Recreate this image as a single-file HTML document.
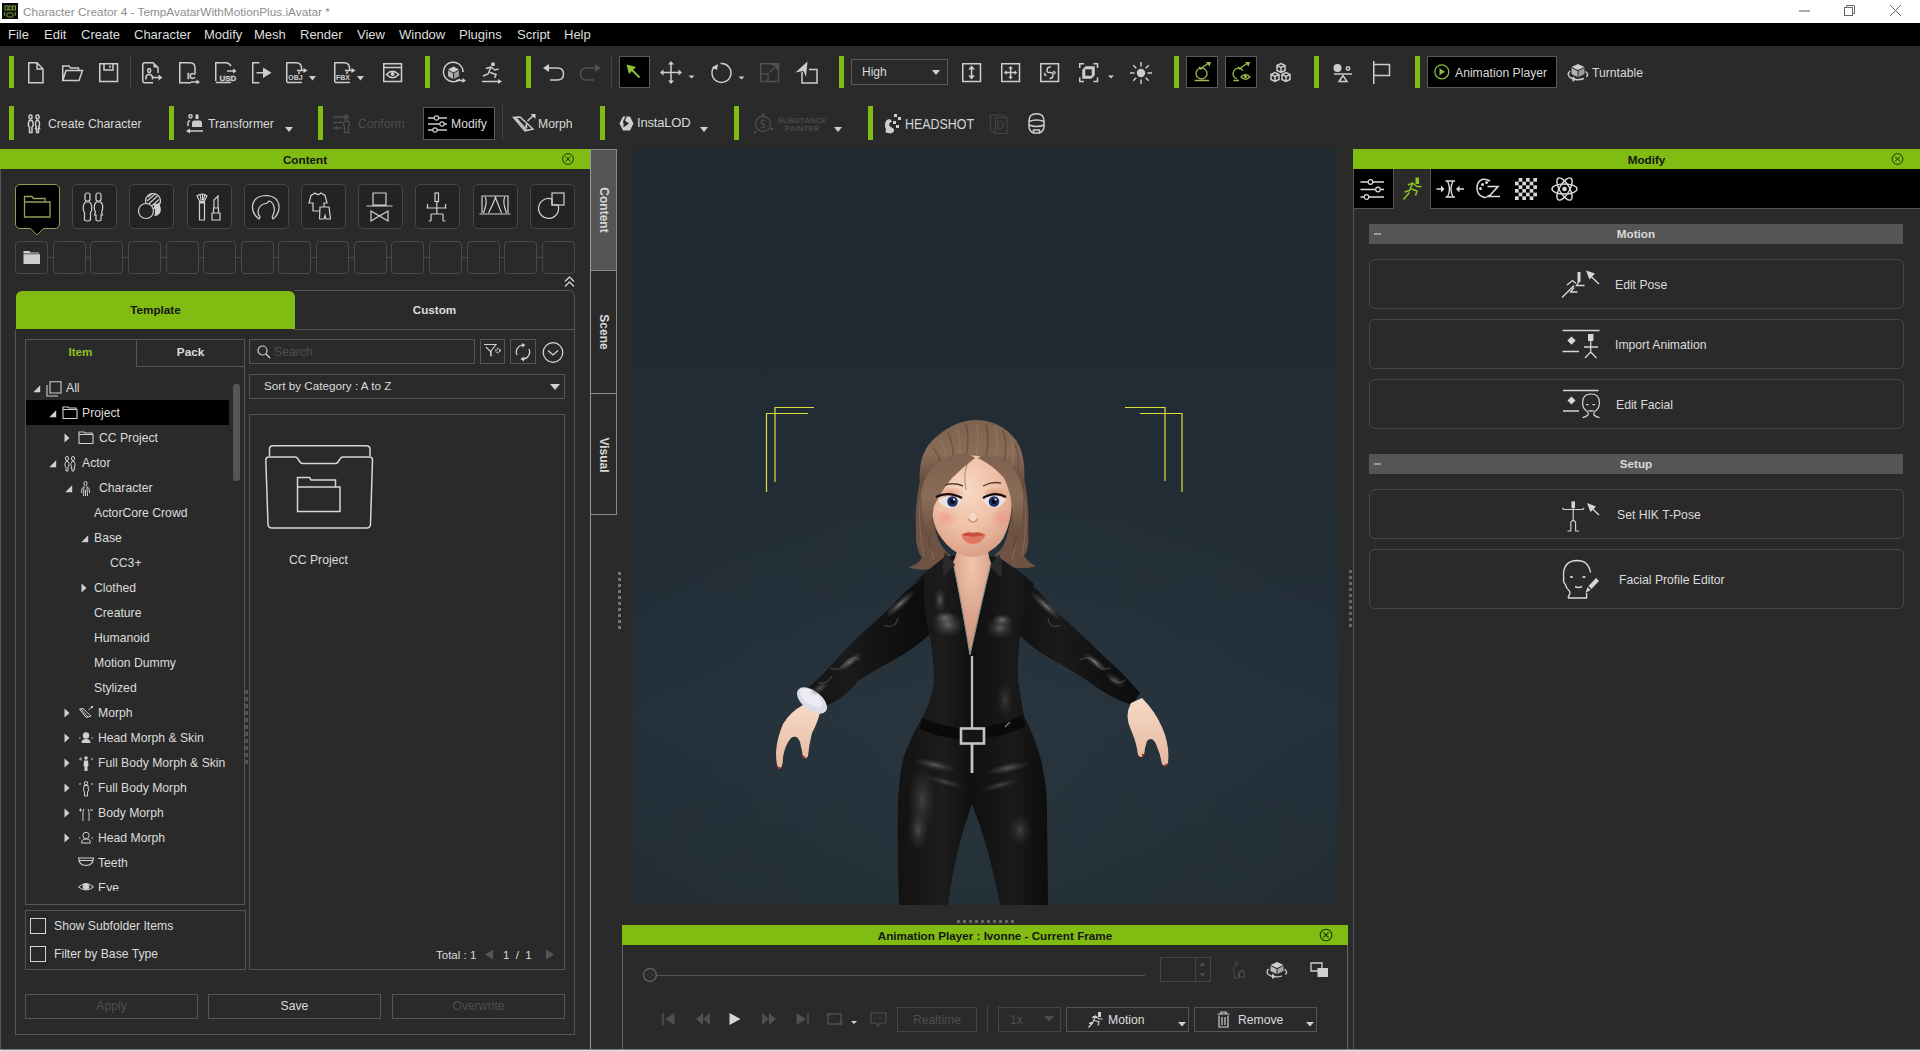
<!DOCTYPE html>
<html><head><meta charset="utf-8">
<style>
*{box-sizing:border-box;margin:0;padding:0}
html,body{width:1920px;height:1051px;overflow:hidden;background:#2a2a2a;font-family:"Liberation Sans",sans-serif;color:#d8d8d8;font-size:12px}
.a{position:absolute;white-space:nowrap}
.g{background:#80bc12}
.gb{position:absolute;width:5px;height:32px;background:#80bc12}
svg{position:absolute;overflow:visible}
.s{fill:none;stroke:#cdcdcd;stroke-width:1.5}
.sd{fill:none;stroke:#505050;stroke-width:1.5}
.f{fill:#cdcdcd}
.t{position:absolute;white-space:nowrap;font-size:12px;color:#d9d9d9;line-height:14px}
.hdr{position:absolute;text-align:center;font-weight:bold;font-size:12px;color:#151515;line-height:14px}
.dd{position:absolute;width:0;height:0;border-left:4px solid transparent;border-right:4px solid transparent;border-top:5px solid #d0d0d0}
</style></head><body>
<!-- ============ TITLE BAR ============ -->
<div class="a" style="left:0;top:0;width:1920px;height:23px;background:#fff"></div>
<div class="a" style="left:2px;top:3px;width:16px;height:16px;background:#0a0a0a"></div>
<svg style="left:2px;top:3px" width="16" height="16"><g fill="none" stroke="#7a9a3a" stroke-width="1"><rect x="3" y="3" width="3" height="4"/><rect x="7" y="3" width="3" height="4"/><rect x="11" y="3" width="2.5" height="4"/><path d="M3 9 Q2 11 3 13 M13 9 Q14 11 13 13"/><rect x="5" y="10" width="6" height="4" rx="1"/></g></svg>
<div class="a" style="left:23px;top:5px;font-size:11.8px;color:#8d8d8d;line-height:14px">Character Creator 4 - TempAvatarWithMotionPlus.iAvatar *</div>
<svg style="left:1798px;top:10px" width="14" height="2"><path d="M1 1H12" stroke="#555" stroke-width="1"/></svg>
<svg style="left:1843px;top:4px" width="14" height="14"><g fill="none" stroke="#666" stroke-width="1"><rect x="1.5" y="3.5" width="8" height="8"/><path d="M3.5 3.5V1.5H11.5V9.5H9.5"/></g></svg>
<svg style="left:1889px;top:4px" width="14" height="14"><path d="M1 1L12 12M12 1L1 12" stroke="#666" stroke-width="1"/></svg>

<!-- ============ MENU BAR ============ -->
<div class="a" style="left:0;top:23px;width:1920px;height:23px;background:#000"></div>
<div class="a" style="top:27px;left:0;font-size:13px;color:#dedede;line-height:15px">
<span class="a" style="left:8px">File</span><span class="a" style="left:44px">Edit</span><span class="a" style="left:81px">Create</span><span class="a" style="left:134px">Character</span><span class="a" style="left:204px">Modify</span><span class="a" style="left:254px">Mesh</span><span class="a" style="left:300px">Render</span><span class="a" style="left:357px">View</span><span class="a" style="left:399px">Window</span><span class="a" style="left:459px">Plugins</span><span class="a" style="left:517px">Script</span><span class="a" style="left:564px">Help</span>
</div>

<!-- ============ TOOLBAR ROW 1 ============ -->
<div class="gb" style="left:9px;top:56px"></div>
<!-- new -->
<svg style="left:28px;top:62px" width="16" height="22"><path class="s" d="M0.75 0.75H9L15 7V20.75H0.75Z M9 0.75V7H15"/></svg>
<!-- open -->
<svg style="left:62px;top:65px" width="22" height="17"><path class="s" d="M0.75 15.5V1H7L8.5 3H16.5V5.5 M0.75 15.5L4 5.5H20.5L17 15.5Z"/></svg>
<!-- save -->
<svg style="left:99px;top:63px" width="20" height="20"><path class="s" d="M0.75 0.75H18.5V18.5H0.75Z M5 0.75V7H14V0.75 M11 2.5V5"/></svg>
<div class="a" style="left:130px;top:56px;width:1px;height:32px;background:#444"></div>
<!-- export avatar -->
<svg style="left:142px;top:62px" width="22" height="22"><path class="s" d="M11 20.75H3Q0.75 20.75 0.75 18.5V3Q0.75 0.75 3 0.75H11L16 5.5V11"/><path class="f" d="M11.5 1.5V5.5H15.5Z"/><ellipse class="s" cx="7.2" cy="8.6" rx="1.4" ry="2.1" stroke-width="1.2"/><path class="s" d="M4 17.5V15.5Q4 12.5 7.2 12.5Q10.4 12.5 10.4 15.5V17.5"/><path class="s" d="M10.5 15.5H18"/><path class="f" d="M16.5 12.5L20.5 15.5L16.5 18.5Z"/></svg>
<!-- IC -->
<svg style="left:179px;top:62px" width="22" height="22"><path class="s" d="M12 20.75H0.75V0.75H11Q16 0.75 16 6V12"/><text x="8" y="17" font-family="Liberation Sans" font-weight="bold" font-size="8.5" fill="#cdcdcd" stroke="#cdcdcd" stroke-width=".3">IC</text><path class="s" d="M12 20H19"/><path class="f" d="M17.5 17.5L21 20L17.5 22.5Z"/></svg>
<!-- USD -->
<svg style="left:215px;top:62px" width="22" height="22"><path class="s" d="M0.75 19V0.75H11Q14 0.75 16 4 M0.75 20.5H16"/><text x="4.5" y="18.5" font-family="Liberation Sans" font-weight="bold" font-size="8" fill="#cdcdcd" stroke="#cdcdcd" stroke-width=".3">USD</text><path class="s" d="M12 9H20"/><path class="f" d="M18 6.5L21.5 9L18 11.5Z"/></svg>
<!-- export bracket -->
<svg style="left:252px;top:62px" width="20" height="22"><path class="s" d="M7.5 0.75H0.75V20.75H7.5 M4.5 10.75H12"/><path class="f" d="M11 5.5L19.5 10.75L11 16Z"/></svg>
<!-- OBJ -->
<svg style="left:286px;top:62px" width="32" height="22"><path class="s" d="M0.75 20V0.75H10Q15.5 0.75 15.5 6V8 M0.75 20.5H16"/><text x="2.2" y="17.5" font-family="Liberation Sans" font-weight="bold" font-size="7" fill="#cdcdcd">OBJ</text><path class="s" d="M11 8.5H19 M13 9.5V12"/><path class="f" d="M17.5 6L21.5 8.5L17.5 11Z"/><path class="f" d="M23 14H30L26.5 18.5Z"/></svg>
<!-- FBX -->
<svg style="left:334px;top:62px" width="32" height="22"><path class="s" d="M0.75 20V0.75H10Q15.5 0.75 15.5 6V8 M0.75 20.5H16"/><text x="2" y="17.5" font-family="Liberation Sans" font-weight="bold" font-size="7" fill="#cdcdcd">FBX</text><path class="s" d="M11 8.5H19 M13 9.5V12"/><path class="f" d="M17.5 6L21.5 8.5L17.5 11Z"/><path class="f" d="M23 14H30L26.5 18.5Z"/></svg>
<!-- eye window -->
<svg style="left:383px;top:63px" width="20" height="20"><path class="s" d="M0.75 0.75H18.5V18.5H0.75Z M0.75 4.5H18.5"/><path class="s" d="M3.5 11.5Q9.6 5 15.7 11.5Q9.6 18 3.5 11.5Z"/><circle class="f" cx="9.6" cy="11" r="2"/></svg>
<div class="gb" style="left:425px;top:56px"></div>
<!-- cube rotate -->
<svg style="left:443px;top:62px" width="24" height="22"><path class="s" d="M17 17A9.75 9.75 0 1 1 20 10" stroke-dasharray="none"/><path class="f" d="M10.5 4.5L16 7.5L10.5 10.5L5 7.5Z"/><path class="f" d="M5 8.5L10 11.2V17L5 14.2Z" opacity=".85"/><path class="f" d="M11 11.2L16 8.5V14.2L11 17Z" opacity=".7"/><path class="s" d="M13 18.5H21"/><path class="f" d="M19.5 16L23 18.5L19.5 21Z"/></svg>
<!-- motion -->
<svg style="left:480px;top:62px" width="23" height="22"><circle class="f" cx="13" cy="2.2" r="2"/><path class="s" d="M6 6.5L11 5L15 8L18.5 7 M11 5Q9 10 8 12L3 14 M10 10.5L16 12.5L14.5 16"/><path class="s" d="M2 19.5H19"/><path class="f" d="M18 17L22 19.5L18 22Z"/></svg>
<div class="gb" style="left:526px;top:56px"></div>
<!-- undo -->
<svg style="left:543px;top:64px" width="23" height="18"><path class="s" d="M4 4H14.5Q20.5 4 20.5 10Q20.5 16 14.5 16H7"/><path class="f" d="M0 4L6 0V8Z"/></svg>
<!-- redo (disabled) -->
<svg style="left:578px;top:64px" width="23" height="18"><path class="sd" d="M19 4H8.5Q2.5 4 2.5 10Q2.5 16 8.5 16H16"/><path fill="#505050" d="M23 4L17 0V8Z"/></svg>
<div class="a" style="left:611px;top:56px;width:1px;height:32px;background:#444"></div>
<!-- select -->
<div class="a" style="left:619px;top:56px;width:31px;height:32px;background:#000;border:1px solid #5a5a5a"></div>
<svg style="left:626px;top:64px" width="20" height="18"><path fill="#8dc43c" d="M0.5 0.5L10 3L6.5 6.5L3 10Z"/><path d="M5 5L13.5 13.5" stroke="#8dc43c" stroke-width="1.8"/></svg>
<!-- move -->
<svg style="left:660px;top:61px" width="36" height="23"><path class="s" d="M11 1.5V21.5 M1 11.5H21"/><path class="f" d="M11 0L14 3.5H8Z M11 23L14 19.5H8Z M0 11.5L3.5 8.5V14.5Z M22 11.5L18.5 8.5V14.5Z"/><path fill="#cdcdcd" d="M28.5 14.5H34.5L31.5 17.5Z"/></svg>
<!-- rotate -->
<svg style="left:710px;top:62px" width="36" height="22"><path class="s" d="M4.5 4.5A9.5 9.5 0 1 0 10.5 1.5"/><path class="f" d="M2 5.5L8 2L7 8Z"/><path fill="#cdcdcd" d="M28.5 14.5H34.5L31.5 17.5Z"/></svg>
<!-- scale disabled -->
<svg style="left:760px;top:63px" width="20" height="20"><path class="sd" d="M0.75 0.75H18.5V18.5H0.75Z M0.75 11H8V18.5 M10 9L17 2 M12 2H17V7"/></svg>
<!-- pivot -->
<svg style="left:795px;top:61px" width="24" height="24"><path class="s" d="M7 11V22H22V8.5H14"/><path class="f" d="M12.5 0.5L11 16L8.5 10L0.5 11.5Z"/></svg>
<div class="gb" style="left:839px;top:56px"></div>
<!-- High dropdown -->
<div class="a" style="left:851px;top:59px;width:97px;height:26px;border:1px solid #5a5a5a"></div>
<div class="a" style="left:862px;top:65px;font-size:12px;color:#dadada;line-height:14px">High</div>
<div class="dd" style="left:932px;top:70px"></div>
<!-- fit boxes -->
<svg style="left:962px;top:63px" width="20" height="20"><path class="s" d="M0.75 0.75H18.5V18.5H0.75Z M9.6 5V14"/><path class="f" d="M9.6 2.5L13 6.5H6.2Z M9.6 16.5L13 12.5H6.2Z"/></svg>
<svg style="left:1001px;top:63px" width="20" height="20"><path class="s" d="M0.75 0.75H18.5V18.5H0.75Z M9.6 4.5V14.7 M4.5 9.6H14.7"/><path class="f" d="M9.6 3L12 5.5H7.2Z M9.6 16.2L12 13.7H7.2Z M3 9.6L5.5 7.2V12Z M16.2 9.6L13.7 7.2V12Z"/></svg>
<svg style="left:1040px;top:63px" width="20" height="20"><path class="s" d="M0.75 0.75H18.5V18.5H0.75Z"/><path class="s" d="M11 4Q7 3.5 7 7.5Q7 10 10 9.5Q13 9 13 12Q13 15.5 9.5 15.5 M5 10Q3.5 12 6.5 12.5 M13 8.5Q16 9 14.5 11"/></svg>
<svg style="left:1079px;top:63px" width="36" height="20"><path class="s" d="M0.75 5V0.75H5 M14.5 0.75H18.5V5 M18.5 14.5V18.5H14.5 M5 18.5H0.75V14.5 M5.5 5.5H13.5V13.5H5.5Z M4 7L7 4H15V12L12 15H4Z"/><path fill="#cdcdcd" d="M29 12.5H35L32 15.5Z"/></svg>
<svg style="left:1130px;top:62px" width="22" height="22"><circle class="f" cx="11" cy="11" r="4.2"/><path class="s" d="M11 0V4.5 M11 17.5V22 M0 11H4.5 M17.5 11H22 M3.2 3.2L6.3 6.3 M15.7 15.7L18.8 18.8 M3.2 18.8L6.3 15.7 M15.7 6.3L18.8 3.2" stroke-width="1.3"/></svg>
<div class="gb" style="left:1174px;top:56px"></div>
<!-- green toggle boxes -->
<div class="a" style="left:1186px;top:56px;width:32px;height:32px;background:#000;border:1px solid #5a5a5a"></div>
<svg style="left:1193px;top:62px" width="20" height="20"><circle cx="8.5" cy="11.5" r="5.5" fill="none" stroke="#9abd52" stroke-width="1.3"/><path d="M6 5L8.5 7.5 M8.5 6L15 1.5" stroke="#9abd52" stroke-width="1.3" fill="none"/><path fill="#9abd52" d="M13 0L18 0L16.5 4.5Z"/><path d="M1.5 18.5H16" stroke="#9abd52" stroke-width="1.5"/></svg>
<div class="a" style="left:1225px;top:56px;width:32px;height:32px;background:#000;border:1px solid #5a5a5a"></div>
<svg style="left:1232px;top:62px" width="20" height="20"><path d="M11 8.5A5.5 5.5 0 1 0 5 17" fill="none" stroke="#9abd52" stroke-width="1.3"/><path d="M6 5L8.5 7.5 M8.5 6L15 1.5" stroke="#9abd52" stroke-width="1.3" fill="none"/><path fill="#9abd52" d="M13 0L18 0L16.5 4.5Z"/><path d="M1.5 18.5H7" stroke="#9abd52" stroke-width="1.5"/><path d="M9 15Q13.5 10.5 18 15Q13.5 19.5 9 15Z" fill="none" stroke="#9abd52" stroke-width="1.2"/><circle cx="13.5" cy="14.6" r="1.6" fill="#9abd52"/></svg>
<!-- cubes -->
<svg style="left:1270px;top:62px" width="22" height="22"><g class="s" stroke-width="1.1"><path d="M7 3.5L11 1.5L15 3.5V8.5L11 10.5L7 8.5Z M7 3.5L11 5.5L15 3.5 M11 5.5V10.5"/><path d="M1 12.5L5 10.5L9 12.5V17.5L5 19.5L1 17.5Z M1 12.5L5 14.5L9 12.5 M5 14.5V19.5"/><path d="M12 12.5L16 10.5L20 12.5V17.5L16 19.5L12 17.5Z M12 12.5L16 14.5L20 12.5 M16 14.5V19.5"/></g></svg>
<div class="gb" style="left:1314px;top:56px"></div>
<!-- balance -->
<svg style="left:1333px;top:63px" width="20" height="20"><circle class="f" cx="4.5" cy="5" r="4"/><circle class="s" cx="15" cy="5.5" r="1.7" stroke-width="1.1"/><path class="s" d="M1 11H19" stroke-width="1.2"/><path class="s" d="M10 12.5L6 18.5H14Z" stroke-width="1.3"/></svg>
<!-- flag -->
<svg style="left:1373px;top:61px" width="18" height="24"><path class="s" d="M0.75 0V23 M0.75 3.5H16.5V14.5H0.75"/></svg>
<div class="gb" style="left:1415px;top:56px"></div>
<!-- animation player btn -->
<div class="a" style="left:1427px;top:56px;width:130px;height:32px;background:#000;border:1px solid #5a5a5a"></div>
<svg style="left:1434px;top:64px" width="16" height="16"><circle cx="7.8" cy="7.8" r="7" fill="none" stroke="#8fbf40" stroke-width="1.2"/><path fill="#8fbf40" d="M5.5 4.3L11 7.8L5.5 11.3Z"/></svg>
<div class="t" style="left:1455px;top:66px;font-size:12.2px">Animation Player</div>
<!-- turntable -->
<svg style="left:1567px;top:63px" width="22" height="20"><path class="f" d="M11 1L17.5 4L11 7L4.5 4Z"/><path class="f" d="M4.5 5L10.5 8V14L4.5 11Z" opacity=".85"/><path class="f" d="M11.5 8L17.5 5V11L11.5 14Z" opacity=".7"/><path class="s" d="M3 8Q-1 12 4 15Q9 18 17 15.5 M18.5 8.5Q22 11 19.5 14" stroke-width="1.2"/><path class="f" d="M6 13L9 16.5L5.5 19Z"/></svg>
<div class="t" style="left:1592px;top:66px;font-size:12.2px">Turntable</div>

<div class="gb" style="left:9px;top:106px;height:34px"></div>
<svg style="left:28px;top:114px" width="14" height="20"><g class="s" stroke-width="1"><rect x="1" y="1" width="3" height="4" rx="1.5"/><rect x="8" y="1" width="3" height="4" rx="1.5"/><path d="M1.5 6.5Q0 8 0.5 12L1.5 13V18.5H4V13L5 12Q5.5 8 4 6.5Z"/><path d="M8.5 6.5Q7 8 7.5 11.5L8.3 12.5L7.5 14.5H8.5V18.5H10.5V14.5H11.5L10.7 12.5L11.5 11.5Q12 8 10.5 6.5Z"/></g></svg>
<div class="t" style="left:48px;top:117px;font-size:12.2px">Create Character</div>
<div class="gb" style="left:169px;top:106px;height:34px"></div>
<svg style="left:186px;top:114px" width="18" height="20"><circle class="s" cx="4.5" cy="2.3" r="1.6" stroke-width="1"/><path class="f" d="M9.5 0.5H12.5V5H9.5Z M8 6.5H14Q16 6.5 16 9V13H6V9Q6 6.5 8 6.5Z"/><path class="s" d="M2 12V9Q2 7 4 6.5" stroke-width="1"/><path class="s" d="M3 17H17" stroke-width="1.2"/><path class="f" d="M0 17L4 14.5V19.5Z"/></svg>
<div class="t" style="left:208px;top:117px;font-size:12.2px">Transformer</div>
<div class="dd" style="left:285px;top:127px"></div>
<div class="gb" style="left:318px;top:106px;height:34px"></div>
<svg style="left:333px;top:114px" width="24" height="20"><g fill="none" stroke="#4e4e4e" stroke-width="1.3"><path d="M0 3H16 M0 8.5H9 M0 14H9"/><circle cx="13" cy="3" r="2" /><path d="M4 12Q2 14 4 16"/><path d="M13 7Q10 7 10.5 11L11.5 12V18.5H15.5V12L16.5 11Q17 7 14 7Z"/></g></svg>
<div class="t" style="left:358px;top:117px;font-size:12.2px;color:#4e4e4e">Conform</div>
<div class="a" style="left:423px;top:107px;width:72px;height:33px;background:#000;border:1px solid #5a5a5a"></div>
<svg style="left:428px;top:115px" width="20" height="18"><g class="s" stroke-width="1.3"><path d="M0 3H19 M0 9H19 M0 15H19"/></g><circle cx="8.5" cy="3" r="2.2" fill="#000" stroke="#cdcdcd" stroke-width="1.2"/><circle cx="14" cy="9" r="2.2" fill="#000" stroke="#cdcdcd" stroke-width="1.2"/><circle cx="7" cy="15" r="2.2" fill="#000" stroke="#cdcdcd" stroke-width="1.2"/></svg>
<div class="t" style="left:451px;top:117px;font-size:12.2px">Modify</div>
<div class="a" style="left:502px;top:105px;width:1px;height:35px;background:#444"></div>
<svg style="left:513px;top:114px" width="24" height="20"><g class="s" stroke-width="1.2"><path d="M0.5 3.5L7 3L20 15L12 17Z M3 4L14 16.5"/><path d="M14 10Q12 12 14 14" /><path d="M14.5 7L21.5 0.5"/></g><path class="f" d="M17.5 0H22.5V5Z"/></svg>
<div class="t" style="left:538px;top:117px;font-size:12.2px">Morph</div>
<div class="gb" style="left:600px;top:106px;height:34px"></div>
<svg style="left:619px;top:116px" width="15" height="15"><path class="f" d="M4 0.5H11L14.5 7.5L11 14.5H4L0.5 7.5Z"/><path d="M4.5 3.5L10 7.5L4.5 11.5Z" fill="#2a2a2a"/><path d="M7 0.5L4.5 7" stroke="#2a2a2a" stroke-width="1.2"/></svg>
<div class="t" style="left:637px;top:116px;font-size:13px;letter-spacing:-0.2px">InstaLOD</div>
<div class="dd" style="left:700px;top:127px"></div>
<div class="gb" style="left:734px;top:106px;height:34px"></div>
<svg style="left:753px;top:113px" width="22" height="22"><g fill="none" stroke="#4a4a4a" stroke-width="1.4"><circle cx="10" cy="11" r="7.5"/><path d="M12.5 8Q10 6.5 8.5 8.3Q7.5 10 10 11Q12.5 12 11.5 13.8Q10 15.5 7.5 14"/></g><circle cx="10" cy="1.8" r="1.6" fill="#4a4a4a"/><circle cx="19" cy="16" r="1.6" fill="#4a4a4a"/><circle cx="2" cy="19" r="1.6" fill="#4a4a4a"/></svg>
<div class="a" style="left:777px;top:117px;font-size:8px;line-height:8px;font-weight:bold;color:#484848;text-align:center;width:50px">SUBSTANCE<br>PAINTER</div>
<div class="dd" style="left:834px;top:127px"></div>
<div class="gb" style="left:868px;top:106px;height:34px"></div>
<svg style="left:884px;top:113px" width="18" height="22"><path class="f" d="M6 6Q1 6 1 12Q1 15 2 16L1.5 19.5L7 20.5L10 18.5V16L7 14Q4.5 13 5.5 10L8 8.5Z"/><rect class="f" x="10" y="1" width="3" height="3"/><rect class="f" x="14" y="4" width="3" height="3"/><rect class="f" x="9" y="8" width="3" height="3"/><rect class="f" x="12" y="12" width="3" height="3"/></svg>
<div class="a" style="left:905px;top:116px;font-size:14.5px;line-height:16px;color:#d5d5d5;transform:scaleX(0.856);transform-origin:0 0">HEADSHOT</div>
<svg style="left:990px;top:114px" width="18" height="20"><g fill="none" stroke="#444" stroke-width="1.2"><path d="M0.5 1H12L17 3.5V19.5H5.5L0.5 17Z M5.5 3.5H17 M5.5 3.5V19.5"/><path d="M8 7V15H10Q13 15 13 11Q13 7 10 7Z"/></g></svg>
<svg style="left:1027px;top:113px" width="19" height="22"><g class="s" stroke-width="1.2"><path d="M2 8Q2 0.8 9.5 0.8Q17 0.8 17 8V13Q17 18 12.5 20H6.5Q2 18 2 13Z"/><path d="M2 8.5Q9.5 5.5 17 8.5 M2 12Q9.5 15 17 12 M6.5 20V17H12.5V20"/></g></svg>


<!-- ============ CONTENT PANEL ============ -->
<!-- CP -->
<!--CPSTART--><div class="a g" style="left:0;top:149px;width:590px;height:20px"></div>
<div class="hdr" style="font-size:11.7px;left:0;top:153px;width:610px">Content</div>
<svg style="left:562px;top:153px" width="13" height="13"><circle cx="6" cy="6" r="5.4" fill="none" stroke="#1e3a00" stroke-width="1"/><path d="M3.5 3.5L8.5 8.5M8.5 3.5L3.5 8.5" stroke="#1e3a00" stroke-width="1"/></svg>
<div class="a" style="left:0;top:169px;width:1px;height:880px;background:#555"></div>
<div class="a" style="left:15px;top:184px;width:45px;height:45px;background:#000;border:1px solid #8aa052;border-radius:5px"></div>
<svg style="left:30px;top:228px" width="14" height="8"><path d="M0 0L7 7L14 0" fill="#000" stroke="#8aa052" stroke-width="1"/><path d="M1 -1H13" stroke="#000" stroke-width="2"/></svg>
<svg style="left:15px;top:187px" width="46" height="46"><path d="M9.5 15V9.5H17L18.5 11.5H30V15 M9.5 15H35V30H9.5Z" fill="none" stroke="#8fa35a" stroke-width="1.3"/></svg>
<div class="a" style="left:72px;top:184px;width:45px;height:45px;background:#232323;border:1px solid #474747;border-radius:5px"></div>
<svg style="left:72px;top:187px" width="46" height="46"><g fill="none" stroke="#d0d0d0" stroke-width="1.2"><rect x="13" y="6" width="5" height="8" rx="2"/><rect x="24" y="6" width="5" height="8" rx="2"/><path d="M13.5 15Q10.5 17 11.5 24L12.5 25.5V33Q15.5 35 18.5 33V25.5L19.5 24Q20.5 17 17.5 15Z"/><path d="M24.5 15Q21.5 17 22.5 23L23.5 25L22.5 28H24V33Q26.5 35 29 33V28H30.5L29.5 25L30.5 23Q31.5 17 28.5 15Z"/></g></svg>
<div class="a" style="left:129px;top:184px;width:45px;height:45px;background:#232323;border:1px solid #474747;border-radius:5px"></div>
<svg style="left:129px;top:187px" width="46" height="46"><g fill="none" stroke="#d0d0d0" stroke-width="1.2"><circle cx="24" cy="14" r="7.5"/><path d="M19 10L23 6.5 M18 14L26.5 6.8 M18.5 18L28.5 9 M21 20.5L30 12.5 M25 21L31 15.5"/><circle cx="17" cy="24" r="7.5" fill="#232323"/></g><path d="M27 16.5A7.5 7.5 0 0 1 25 29A7.5 7.5 0 0 0 24.5 18Z" fill="#d0d0d0"/><path d="M24.8 17.8Q29 15.5 30.5 18Q33 22 31 26Q29 29 25.5 29Q27 23 24.8 17.8Z" fill="#d0d0d0"/></svg>
<div class="a" style="left:187px;top:184px;width:45px;height:45px;background:#232323;border:1px solid #474747;border-radius:5px"></div>
<svg style="left:187px;top:187px" width="46" height="46"><g fill="none" stroke="#d0d0d0" stroke-width="1.2"><path d="M10 9Q15 5 20 9L17.5 14H12.5Z M13 7L14 13 M15.5 6.5L15.5 13 M18 7L16.5 13 M12 15H18 M12.5 16H17.5V33H12.5Z"/><path d="M25 33V26H33V33Z M26.5 26V21H31.5V26 M27 21V13L31 9V21"/></g></svg>
<div class="a" style="left:244px;top:184px;width:45px;height:45px;background:#232323;border:1px solid #474747;border-radius:5px"></div>
<svg style="left:244px;top:187px" width="46" height="46"><g fill="none" stroke="#d0d0d0" stroke-width="1.2"><path d="M15 32Q8 27 8.5 19Q9.5 9 22 8.5Q34 9 35 19Q35.5 27 29 32Q27.5 30 29 28Q31 24 30 20Q29 15 25 14Q23 17 19.5 17Q15 19 14 24Q14 28 16 30Q16 31 15 32Z"/></g></svg>
<div class="a" style="left:301px;top:184px;width:45px;height:45px;background:#232323;border:1px solid #474747;border-radius:5px"></div>
<svg style="left:301px;top:187px" width="46" height="46"><g fill="none" stroke="#d0d0d0" stroke-width="1.2"><path d="M14 6L10 8.5L8 16H12V24H23V16H26L24 8.5L20 6Q17 9 14 6Z"/><path d="M19 20H28L29.5 32H25L24 28.5L23 32H18.5Z" fill="#232323"/></g></svg>
<div class="a" style="left:358px;top:184px;width:45px;height:45px;background:#232323;border:1px solid #474747;border-radius:5px"></div>
<svg style="left:358px;top:187px" width="46" height="46"><g fill="none" stroke="#d0d0d0" stroke-width="1.2"><path d="M15 6H28V18H15Z M8.5 19H34.5"/><path d="M13 24L21.5 29L30 24V34L21.5 29L13 34Z"/></g></svg>
<div class="a" style="left:415px;top:184px;width:45px;height:45px;background:#232323;border:1px solid #474747;border-radius:5px"></div>
<svg style="left:415px;top:187px" width="46" height="46"><g fill="none" stroke="#d0d0d0" stroke-width="1.2"><rect x="20" y="6" width="3.5" height="8.5"/><path d="M11.5 21H31.5 M12.5 17V21 M30.5 17V21 M21.8 14.5V27 M16 27H28 M16 27V34 M28 27V34 M13.5 34H16 M28 34H30.5"/></g></svg>
<div class="a" style="left:473px;top:184px;width:45px;height:45px;background:#232323;border:1px solid #474747;border-radius:5px"></div>
<svg style="left:473px;top:187px" width="46" height="46"><g fill="none" stroke="#d0d0d0" stroke-width="1.2"><path d="M9 26V9H35V26 M6.5 27H37.5"/><path d="M10.5 26Q15 14 12 9.5 M15.5 26Q20 17 23 9.5M22 9.5Q25 17 28.5 26 M33.5 26Q29 14 32 9.5"/></g></svg>
<div class="a" style="left:530px;top:184px;width:45px;height:45px;background:#232323;border:1px solid #474747;border-radius:5px"></div>
<svg style="left:530px;top:187px" width="46" height="46"><g fill="none" stroke="#d0d0d0" stroke-width="1.2"><rect x="22" y="6" width="12" height="12"/><path d="M22 12A10 10 0 1 0 28 18H22Z"/></g></svg>
<div class="a" style="left:15px;top:241px;width:33px;height:33px;border:1px solid #4a4a4a;border-radius:4px"></div>
<div class="a" style="left:48px;top:257px;width:5px;height:1px;background:#4a4a4a"></div>
<div class="a" style="left:53px;top:241px;width:33px;height:33px;border:1px solid #4a4a4a;border-radius:4px"></div>
<div class="a" style="left:86px;top:257px;width:5px;height:1px;background:#4a4a4a"></div>
<div class="a" style="left:90px;top:241px;width:33px;height:33px;border:1px solid #4a4a4a;border-radius:4px"></div>
<div class="a" style="left:123px;top:257px;width:5px;height:1px;background:#4a4a4a"></div>
<div class="a" style="left:128px;top:241px;width:33px;height:33px;border:1px solid #4a4a4a;border-radius:4px"></div>
<div class="a" style="left:161px;top:257px;width:5px;height:1px;background:#4a4a4a"></div>
<div class="a" style="left:166px;top:241px;width:33px;height:33px;border:1px solid #4a4a4a;border-radius:4px"></div>
<div class="a" style="left:199px;top:257px;width:5px;height:1px;background:#4a4a4a"></div>
<div class="a" style="left:203px;top:241px;width:33px;height:33px;border:1px solid #4a4a4a;border-radius:4px"></div>
<div class="a" style="left:236px;top:257px;width:5px;height:1px;background:#4a4a4a"></div>
<div class="a" style="left:241px;top:241px;width:33px;height:33px;border:1px solid #4a4a4a;border-radius:4px"></div>
<div class="a" style="left:274px;top:257px;width:5px;height:1px;background:#4a4a4a"></div>
<div class="a" style="left:278px;top:241px;width:33px;height:33px;border:1px solid #4a4a4a;border-radius:4px"></div>
<div class="a" style="left:311px;top:257px;width:5px;height:1px;background:#4a4a4a"></div>
<div class="a" style="left:316px;top:241px;width:33px;height:33px;border:1px solid #4a4a4a;border-radius:4px"></div>
<div class="a" style="left:349px;top:257px;width:5px;height:1px;background:#4a4a4a"></div>
<div class="a" style="left:354px;top:241px;width:33px;height:33px;border:1px solid #4a4a4a;border-radius:4px"></div>
<div class="a" style="left:387px;top:257px;width:5px;height:1px;background:#4a4a4a"></div>
<div class="a" style="left:391px;top:241px;width:33px;height:33px;border:1px solid #4a4a4a;border-radius:4px"></div>
<div class="a" style="left:424px;top:257px;width:5px;height:1px;background:#4a4a4a"></div>
<div class="a" style="left:429px;top:241px;width:33px;height:33px;border:1px solid #4a4a4a;border-radius:4px"></div>
<div class="a" style="left:462px;top:257px;width:5px;height:1px;background:#4a4a4a"></div>
<div class="a" style="left:467px;top:241px;width:33px;height:33px;border:1px solid #4a4a4a;border-radius:4px"></div>
<div class="a" style="left:500px;top:257px;width:5px;height:1px;background:#4a4a4a"></div>
<div class="a" style="left:504px;top:241px;width:33px;height:33px;border:1px solid #4a4a4a;border-radius:4px"></div>
<div class="a" style="left:537px;top:257px;width:5px;height:1px;background:#4a4a4a"></div>
<div class="a" style="left:542px;top:241px;width:33px;height:33px;border:1px solid #4a4a4a;border-radius:4px"></div>
<svg style="left:23px;top:250px" width="18" height="15"><path d="M0.5 2V1H6.5L7.5 2.5H16V3.5H0.5Z M0.5 4.2H17V14H0.5Z" fill="#cfcfcf"/></svg>
<svg style="left:564px;top:276px" width="11" height="12"><path d="M1 5.5L5.5 1L10 5.5 M1 10.5L5.5 6L10 10.5" fill="none" stroke="#cfcfcf" stroke-width="1.3"/></svg>
<div class="a g" style="left:16px;top:291px;width:279px;height:38px;border-radius:6px 6px 0 0"></div>
<div class="hdr" style="font-size:11.7px;left:16px;top:303px;width:279px;">Template</div>
<div class="a" style="left:294px;top:290px;width:281px;height:40px;border:1px solid #555;border-left:none;border-radius:0 6px 0 0"></div>
<div class="hdr" style="font-size:11.7px;left:294px;top:303px;width:281px;color:#dcdcdc">Custom</div>
<div class="a" style="left:15px;top:329px;width:560px;height:706px;border:1px solid #555;border-top:none"></div>
<div class="a" style="left:25px;top:339px;width:220px;height:28px;border:1px solid #555;border-bottom:none"></div>
<div class="a" style="left:136px;top:339px;width:1px;height:28px;background:#555"></div>
<div class="a" style="left:136px;top:366px;width:109px;height:1px;background:#555"></div>
<div class="hdr" style="font-size:11.7px;left:25px;top:345px;width:111px;color:#8cc31c;">Item</div>
<div class="hdr" style="font-size:11.7px;left:136px;top:345px;width:109px;color:#dcdcdc;">Pack</div>
<div class="a" style="left:25px;top:366px;width:220px;height:539px;border:1px solid #555;border-top:none"></div>
<div class="a" style="left:26px;top:400px;width:203px;height:25px;background:#000"></div>
<div class="a" style="left:233px;top:384px;width:7px;height:97px;background:#555;border-radius:3px"></div>
<div class="a" style="left:245px;top:690px;width:3px;height:4px;background:#555"></div>
<div class="a" style="left:245px;top:697px;width:3px;height:4px;background:#555"></div>
<div class="a" style="left:245px;top:704px;width:3px;height:4px;background:#555"></div>
<div class="a" style="left:245px;top:711px;width:3px;height:4px;background:#555"></div>
<div class="a" style="left:245px;top:718px;width:3px;height:4px;background:#555"></div>
<div class="a" style="left:245px;top:725px;width:3px;height:4px;background:#555"></div>
<div class="a" style="left:245px;top:732px;width:3px;height:4px;background:#555"></div>
<div class="a" style="left:245px;top:739px;width:3px;height:4px;background:#555"></div>
<div class="a" style="left:245px;top:746px;width:3px;height:4px;background:#555"></div>
<div class="a" style="left:245px;top:753px;width:3px;height:4px;background:#555"></div>
<div class="a" style="left:245px;top:760px;width:3px;height:4px;background:#555"></div>
<div class="a" style="left:26px;top:376px;width:203px;height:515px;overflow:hidden">
<svg style="left:7px;top:9px" width="8" height="8"><path d="M7.2 0.3V7.2H0.3Z" fill="#d0d0d0"/></svg>
<svg style="left:20px;top:5px" width="16" height="16"><path d="M1 4V15H12 M4 0.8H15V12H4Z" fill="none" stroke="#d0d0d0" stroke-width="1.1"/></svg>
<div class="t" style="left:40px;top:4px;font-size:12.2px;color:#dcdcdc;line-height:16px">All</div>
<svg style="left:23px;top:34px" width="8" height="8"><path d="M7.2 0.3V7.2H0.3Z" fill="#d0d0d0"/></svg>
<svg style="left:36px;top:30px" width="16" height="16"><path d="M1 2V1H6L7 2H14V3.5 M1 3.5H15V12.5H1Z M1 2V12" fill="none" stroke="#d0d0d0" stroke-width="1.1"/></svg>
<div class="t" style="left:56px;top:29px;font-size:12.2px;color:#dcdcdc;line-height:16px">Project</div>
<svg style="left:38px;top:57px" width="6" height="10"><path d="M0.5 0.5L5.5 5L0.5 9.5Z" fill="#d0d0d0"/></svg>
<svg style="left:52px;top:55px" width="16" height="16"><path d="M1 2V1H6L7 2H14V3.5 M1 3.5H15V12.5H1Z M1 2V12" fill="none" stroke="#d0d0d0" stroke-width="1.1"/></svg>
<div class="t" style="left:73px;top:54px;font-size:12.2px;color:#dcdcdc;line-height:16px">CC Project</div>
<svg style="left:23px;top:84px" width="8" height="8"><path d="M7.2 0.3V7.2H0.3Z" fill="#d0d0d0"/></svg>
<svg style="left:38px;top:80px" width="16" height="16"><g fill="none" stroke="#d0d0d0" stroke-width="1"><rect x="1.5" y="0.5" width="3" height="4" rx="1.5"/><rect x="7.5" y="0.5" width="3" height="4" rx="1.5"/><path d="M2 5.5Q0.5 7 1 10L2 11V15H4V11L5 10Q5.5 7 4 5.5Z M8 5.5Q6.5 7 7 10L8 11L7 12.5H8V15H10V12.5H11L10 11L11 10Q11.5 7 10 5.5Z"/></g></svg>
<div class="t" style="left:56px;top:79px;font-size:12.2px;color:#dcdcdc;line-height:16px">Actor</div>
<svg style="left:39px;top:109px" width="8" height="8"><path d="M7.2 0.3V7.2H0.3Z" fill="#d0d0d0"/></svg>
<svg style="left:54px;top:105px" width="16" height="16"><g fill="none" stroke="#d0d0d0" stroke-width="1"><rect x="4" y="0.5" width="3" height="4" rx="1.5"/><path d="M4 5.5Q1 7 1.5 12 M7 5.5Q10 7 9.5 12 M4 5.5L3.5 15 M7 5.5L7.5 15 M5.5 9V15"/></g></svg>
<div class="t" style="left:73px;top:104px;font-size:12.2px;color:#dcdcdc;line-height:16px">Character</div>
<div class="t" style="left:68px;top:129px;font-size:12.2px;color:#dcdcdc;line-height:16px">ActorCore Crowd</div>
<svg style="left:55px;top:159px" width="8" height="8"><path d="M7.2 0.3V7.2H0.3Z" fill="#d0d0d0"/></svg>
<div class="t" style="left:68px;top:154px;font-size:12.2px;color:#dcdcdc;line-height:16px">Base</div>
<div class="t" style="left:84px;top:179px;font-size:12.2px;color:#dcdcdc;line-height:16px">CC3+</div>
<svg style="left:55px;top:207px" width="6" height="10"><path d="M0.5 0.5L5.5 5L0.5 9.5Z" fill="#d0d0d0"/></svg>
<div class="t" style="left:68px;top:204px;font-size:12.2px;color:#dcdcdc;line-height:16px">Clothed</div>
<div class="t" style="left:68px;top:229px;font-size:12.2px;color:#dcdcdc;line-height:16px">Creature</div>
<div class="t" style="left:68px;top:254px;font-size:12.2px;color:#dcdcdc;line-height:16px">Humanoid</div>
<div class="t" style="left:68px;top:279px;font-size:12.2px;color:#dcdcdc;line-height:16px">Motion Dummy</div>
<div class="t" style="left:68px;top:304px;font-size:12.2px;color:#dcdcdc;line-height:16px">Stylized</div>
<svg style="left:38px;top:332px" width="6" height="10"><path d="M0.5 0.5L5.5 5L0.5 9.5Z" fill="#d0d0d0"/></svg>
<svg style="left:53px;top:330px" width="16" height="16"><g fill="none" stroke="#d0d0d0" stroke-width="1"><path d="M0.5 3L4 2.5L12 10L7 11.5Z M2 3L9 11"/><path d="M9.5 4L13.5 0.5"/></g><path d="M11.5 0H14V2.5Z" fill="#d0d0d0"/></svg>
<div class="t" style="left:72px;top:329px;font-size:12.2px;color:#dcdcdc;line-height:16px">Morph</div>
<svg style="left:38px;top:357px" width="6" height="10"><path d="M0.5 0.5L5.5 5L0.5 9.5Z" fill="#d0d0d0"/></svg>
<svg style="left:53px;top:355px" width="16" height="16"><circle cx="7" cy="4.5" r="3.2" fill="#d0d0d0"/><path d="M2.5 12Q2.5 8 7 8Q11.5 8 11.5 12Z" fill="#d0d0d0"/><path d="M0 7H1.5 M12.5 7H14" stroke="#d0d0d0"/></svg>
<div class="t" style="left:72px;top:354px;font-size:12.2px;color:#dcdcdc;line-height:16px">Head Morph &amp; Skin</div>
<svg style="left:38px;top:382px" width="6" height="10"><path d="M0.5 0.5L5.5 5L0.5 9.5Z" fill="#d0d0d0"/></svg>
<svg style="left:53px;top:380px" width="16" height="16"><circle cx="7" cy="2" r="1.8" fill="#d0d0d0"/><path d="M5 4.5H9L9.5 10L8.5 10.5V15H5.5V10.5L4.5 10Z" fill="#d0d0d0"/><path d="M0 3H2 M12 3H14 M2 1.5V4.5 " stroke="#d0d0d0"/></svg>
<div class="t" style="left:72px;top:379px;font-size:12.2px;color:#dcdcdc;line-height:16px">Full Body Morph &amp; Skin</div>
<svg style="left:38px;top:407px" width="6" height="10"><path d="M0.5 0.5L5.5 5L0.5 9.5Z" fill="#d0d0d0"/></svg>
<svg style="left:53px;top:405px" width="16" height="16"><g fill="none" stroke="#d0d0d0" stroke-width="1"><circle cx="7" cy="2.2" r="1.7"/><path d="M5 4.5H9L9.5 10L8.5 10.5V15H5.5V10.5L4.5 10Z M0 3H2 M12 3H14"/></g></svg>
<div class="t" style="left:72px;top:404px;font-size:12.2px;color:#dcdcdc;line-height:16px">Full Body Morph</div>
<svg style="left:38px;top:432px" width="6" height="10"><path d="M0.5 0.5L5.5 5L0.5 9.5Z" fill="#d0d0d0"/></svg>
<svg style="left:53px;top:430px" width="16" height="16"><g fill="none" stroke="#d0d0d0" stroke-width="1"><path d="M5 3Q3.5 4 4 15 M9 3Q10.5 4 10 15 M0 4H3 M11 4H14 M1.5 2.5V5.5"/></g></svg>
<div class="t" style="left:72px;top:429px;font-size:12.2px;color:#dcdcdc;line-height:16px">Body Morph</div>
<svg style="left:38px;top:457px" width="6" height="10"><path d="M0.5 0.5L5.5 5L0.5 9.5Z" fill="#d0d0d0"/></svg>
<svg style="left:53px;top:455px" width="16" height="16"><g fill="none" stroke="#d0d0d0" stroke-width="1"><circle cx="7" cy="4.5" r="3.2"/><path d="M2.5 12Q2.5 8 7 8Q11.5 8 11.5 12Z M0 7H1.5 M12.5 7H14"/></g></svg>
<div class="t" style="left:72px;top:454px;font-size:12.2px;color:#dcdcdc;line-height:16px">Head Morph</div>
<svg style="left:52px;top:480px" width="16" height="16"><g fill="none" stroke="#d0d0d0" stroke-width="1.1"><path d="M0.5 2H15.5Q15 9.5 8 9.5Q1 9.5 0.5 2Z M1.5 4.5H14.5"/></g></svg>
<div class="t" style="left:72px;top:479px;font-size:12.2px;color:#dcdcdc;line-height:16px">Teeth</div>
<svg style="left:52px;top:505px" width="16" height="16"><path d="M0.5 6Q8 -1 15.5 6Q8 12 0.5 6Z" fill="none" stroke="#d0d0d0" stroke-width="1"/><circle cx="8" cy="5.5" r="3.3" fill="#d0d0d0"/></svg>
<div class="t" style="left:72px;top:504px;font-size:12.2px;color:#dcdcdc;line-height:16px">Eye</div>
</div>
<div class="a" style="left:25px;top:910px;width:221px;height:60px;border:1px solid #555"></div>
<div class="a" style="left:30px;top:918px;width:16px;height:16px;border:1px solid #d0d0d0"></div>
<div class="t" style="left:54px;top:918px;font-size:12.2px;line-height:16px;color:#dcdcdc">Show Subfolder Items</div>
<div class="a" style="left:30px;top:946px;width:16px;height:16px;border:1px solid #d0d0d0"></div>
<div class="t" style="left:54px;top:946px;font-size:12.2px;line-height:16px;color:#dcdcdc">Filter by Base Type</div>
<div class="a" style="left:249px;top:339px;width:226px;height:25px;border:1px solid #555"></div>
<svg style="left:257px;top:345px" width="14" height="14"><circle cx="5.5" cy="5.5" r="4.5" fill="none" stroke="#cfcfcf" stroke-width="1.2"/><path d="M8.8 8.8L13 13" stroke="#cfcfcf" stroke-width="1.4"/></svg>
<div class="t" style="left:274px;top:345px;font-size:12.2px;color:#4e4e4e">Search</div>
<div class="a" style="left:480px;top:339px;width:25px;height:25px;border:1px solid #555"></div>
<svg style="left:483px;top:343px" width="20" height="18"><path d="M1 1.5H13L8 8V13.5" fill="none" stroke="#cfcfcf" stroke-width="1.1"/><path d="M3 4L7.5 8.5L8 13" fill="none" stroke="#cfcfcf" stroke-width="1.1"/><circle cx="15" cy="7.5" r="2" fill="none" stroke="#cfcfcf" stroke-width="1.5" stroke-dasharray="1.5 1"/></svg>
<div class="a" style="left:510px;top:339px;width:26px;height:25px;border:1px solid #555"></div>
<svg style="left:513px;top:342px" width="20" height="20"><path d="M4 13A7 7 0 0 1 10 3 M16 7A7 7 0 0 1 10 17" fill="none" stroke="#cfcfcf" stroke-width="1.2"/><path d="M9 1L12.5 3L9 5.5Z M11 14.5L7.5 17L11 19.5Z" fill="#cfcfcf"/></svg>
<svg style="left:542px;top:342px" width="22" height="22"><circle cx="11" cy="10.5" r="9.8" fill="none" stroke="#d8d8d8" stroke-width="1.2"/><path d="M6 8.5L11 13L16 8.5" fill="none" stroke="#d8d8d8" stroke-width="1.2"/></svg>
<div class="a" style="left:249px;top:374px;width:316px;height:25px;border:1px solid #555"></div>
<div class="t" style="left:264px;top:379px;font-size:11.7px;color:#dcdcdc">Sort by Category : A to Z</div>
<div class="dd" style="left:550px;top:384px;border-left-width:5px;border-right-width:5px;border-top-width:6px"></div>
<div class="a" style="left:249px;top:414px;width:316px;height:556px;border:1px solid #555"></div>
<svg style="left:265px;top:444px" width="110" height="86"><path d="M4.5 12V5Q4.5 1.7 8 1.7H101Q105 1.7 105 5V12" fill="none" stroke="#d6d6d6" stroke-width="1.5"/><path d="M0.8 16Q0.8 13 3.8 13H30Q32 13 33 15L35 18Q36 19.5 38 19.5H70Q72 19.5 73 18L75 15Q76 13 78 13H104.5Q107.5 13 107.5 16L105.5 80Q105.5 84 101.5 84H7Q3 84 3 80Z" fill="#2a2a2a" stroke="#d6d6d6" stroke-width="1.5"/><path d="M32.5 43V33.5H44.5L46 36H70.5V43 M32.5 43H75V67.5H32.5Z" fill="none" stroke="#d6d6d6" stroke-width="1.5"/></svg>
<div class="t" style="left:289px;top:552px;font-size:12.2px;color:#dcdcdc;line-height:16px">CC Project</div>
<div class="t" style="left:436px;top:947px;font-size:11.5px;color:#dcdcdc;line-height:16px">Total : 1</div>
<svg style="left:484px;top:949px" width="10" height="11"><path d="M9 0.5V10.5L1 5.5Z" fill="#555"/></svg>
<div class="t" style="left:503px;top:947px;font-size:11.5px;color:#dcdcdc;line-height:16px">1&nbsp;&nbsp;/&nbsp;&nbsp;1</div>
<svg style="left:545px;top:949px" width="10" height="11"><path d="M1 0.5V10.5L9 5.5Z" fill="#555"/></svg>
<div class="a" style="left:25px;top:994px;width:173px;height:25px;border:1px solid #555"></div>
<div class="t" style="left:25px;top:999px;width:173px;text-align:center;font-size:12.2px;color:#4e4e4e">Apply</div>
<div class="a" style="left:208px;top:994px;width:173px;height:25px;border:1px solid #555"></div>
<div class="t" style="left:208px;top:999px;width:173px;text-align:center;font-size:12.2px;color:#dcdcdc">Save</div>
<div class="a" style="left:392px;top:994px;width:173px;height:25px;border:1px solid #555"></div>
<div class="t" style="left:392px;top:999px;width:173px;text-align:center;font-size:12.2px;color:#4e4e4e">Overwrite</div>
<div class="a" style="left:590px;top:149px;width:1px;height:900px;background:#9a9a9a"></div>
<div class="a" style="left:590px;top:149px;width:27px;height:366px;border:1px solid #8a8a8a;border-left:none"></div>
<div class="a" style="left:591px;top:150px;width:25px;height:121px;background:#555"></div>
<div class="a" style="left:591px;top:270px;width:25px;height:1px;background:#8a8a8a"></div>
<div class="a" style="left:591px;top:393px;width:25px;height:1px;background:#8a8a8a"></div>
<div class="a" style="left:544px;top:203px;width:120px;text-align:center;font-weight:bold;font-size:12px;line-height:14px;color:#d8d8d8;transform:rotate(90deg)">Content</div>
<div class="a" style="left:544px;top:325px;width:120px;text-align:center;font-weight:bold;font-size:12px;line-height:14px;color:#d8d8d8;transform:rotate(90deg)">Scene</div>
<div class="a" style="left:544px;top:448px;width:120px;text-align:center;font-weight:bold;font-size:12px;line-height:14px;color:#d8d8d8;transform:rotate(90deg)">Visual</div>
<div class="a" style="left:618px;top:572px;width:3px;height:3px;background:#777"></div>
<div class="a" style="left:618px;top:578px;width:3px;height:3px;background:#777"></div>
<div class="a" style="left:618px;top:584px;width:3px;height:3px;background:#777"></div>
<div class="a" style="left:618px;top:590px;width:3px;height:3px;background:#777"></div>
<div class="a" style="left:618px;top:596px;width:3px;height:3px;background:#777"></div>
<div class="a" style="left:618px;top:602px;width:3px;height:3px;background:#777"></div>
<div class="a" style="left:618px;top:608px;width:3px;height:3px;background:#777"></div>
<div class="a" style="left:618px;top:614px;width:3px;height:3px;background:#777"></div>
<div class="a" style="left:618px;top:620px;width:3px;height:3px;background:#777"></div>
<div class="a" style="left:618px;top:626px;width:3px;height:3px;background:#777"></div><!--CPEND-->

<!-- ============ VIEWPORT ============ -->
<!--VPSTART--><div class="a" style="left:632px;top:149px;width:706px;height:756px;background:radial-gradient(ellipse 55% 40% at 50% 80%,rgba(44,58,66,.55) 0%,rgba(44,58,66,0) 100%),linear-gradient(#1f2a31 0%,#212c34 40%,#24303a 75%,#222d35 100%)"></div>
<svg style="left:632px;top:149px" width="706" height="756">
<defs>
<radialGradient id="skin" cx="45%" cy="35%" r="70%"><stop offset="0" stop-color="#f8d8c4"/><stop offset=".55" stop-color="#efbfa6"/><stop offset="1" stop-color="#d49a80"/></radialGradient>
<radialGradient id="chest" cx="50%" cy="20%" r="80%"><stop offset="0" stop-color="#f3c6ae"/><stop offset="1" stop-color="#c88d75"/></radialGradient>
<radialGradient id="cheek" cx="50%" cy="50%" r="50%"><stop offset="0" stop-color="#f08a80" stop-opacity=".55"/><stop offset="1" stop-color="#f08a80" stop-opacity="0"/></radialGradient>
<radialGradient id="shadow" cx="50%" cy="50%" r="50%"><stop offset="0" stop-color="#d9806a" stop-opacity=".6"/><stop offset="1" stop-color="#d9806a" stop-opacity="0"/></radialGradient>
<linearGradient id="hair" x1="0" y1="0" x2="0" y2="1"><stop offset="0" stop-color="#7e624f"/><stop offset=".45" stop-color="#8a6d58"/><stop offset="1" stop-color="#5c4334"/></linearGradient>
<linearGradient id="leath" x1="0" y1="0" x2="1" y2="0"><stop offset="0" stop-color="#121212"/><stop offset=".35" stop-color="#1a1a1a"/><stop offset=".6" stop-color="#131313"/><stop offset="1" stop-color="#0c0c0c"/></linearGradient>
<linearGradient id="legs" x1="0" y1="0" x2="1" y2="0"><stop offset="0" stop-color="#121212"/><stop offset=".3" stop-color="#1c1c1c"/><stop offset=".5" stop-color="#101010"/><stop offset=".75" stop-color="#1a1a1a"/><stop offset="1" stop-color="#0d0d0d"/></linearGradient>
<radialGradient id="hl" cx="50%" cy="50%" r="50%"><stop offset="0" stop-color="#808080" stop-opacity=".9"/><stop offset=".5" stop-color="#606060" stop-opacity=".45"/><stop offset="1" stop-color="#5a5a5a" stop-opacity="0"/></radialGradient>
<linearGradient id="hand" x1="0" y1="0" x2="0" y2="1"><stop offset="0" stop-color="#f6dac6"/><stop offset="1" stop-color="#e6b69e"/></linearGradient>
</defs>
<g fill="none" stroke="#dede3c" stroke-width="1.2">
<path d="M134.5 343V264.5H176"/><path d="M143 333V258.5H182"/>
<path d="M493 258.5H533V332"/><path d="M508 264.5H550V343"/>
</g>
<g transform="translate(-632 -149)">
<!-- back hair / side strands -->
<path d="M923 470Q914 500 916 530Q915 548 922 558Q916 566 908 567Q920 572 934 568Q944 566 951 556Q940 548 936 532Q930 510 934 480Z" fill="#6e5342"/>
<path d="M1022 470Q1030 500 1028 530Q1030 548 1024 556Q1030 564 1036 566Q1024 570 1012 567Q1002 564 995 555Q1005 548 1008 532Q1014 510 1010 480Z" fill="#6e5342"/>
<g fill="none" stroke="#8e7260" stroke-width="1" opacity=".7"><path d="M920 500Q918 530 924 556 M927 505Q926 535 934 560 M1025 500Q1027 530 1022 556 M1018 505Q1019 535 1012 560"/></g>
<!-- left arm -->
<path d="M924 577Q905 590 891 607Q875 622 858 637Q840 655 825 672Q815 682 806 690L826 706Q845 698 858 681Q878 668 896 659Q915 648 930 634Z" fill="url(#leath)"/>
<!-- right arm -->
<path d="M1022 577Q1040 590 1051 607Q1068 622 1084 637Q1102 655 1121 672Q1132 684 1140 693L1132 705Q1108 697 1088 681Q1068 668 1051 659Q1032 648 1018 634Z" fill="url(#leath)"/>
<!-- arm highlights -->
<ellipse cx="900" cy="604" rx="20" ry="4.5" transform="rotate(-42 900 604)" fill="url(#hl)"/>
<ellipse cx="1046" cy="606" rx="20" ry="4.5" transform="rotate(42 1046 606)" fill="url(#hl)"/>
<ellipse cx="850" cy="662" rx="15" ry="4" transform="rotate(-38 850 662)" fill="url(#hl)"/>
<ellipse cx="1095" cy="662" rx="15" ry="4" transform="rotate(38 1095 662)" fill="url(#hl)"/>


<g fill="none" stroke="#8a8a8a" stroke-width="1.3" opacity=".35">
<path d="M1110 668Q1100 672 1095 662Q1088 655 1080 660 M1125 680Q1118 686 1110 678 M1060 625Q1050 630 1048 618"/>
<path d="M830 668Q840 672 846 662Q852 655 860 660 M818 682Q826 686 832 676 M884 625Q895 630 898 618"/>
</g>
<!-- hands -->
<path d="M803 705Q790 712 783 724Q777 738 776 752Q776 766 779 769Q783 768 783 757Q785 745 791 738Q797 734 800 742Q802 750 803 757Q806 760 808 756Q809 745 812 733Q818 722 820 712Z" fill="url(#hand)"/>
<path d="M1131 703Q1124 716 1131 730Q1137 744 1138 755Q1141 759 1144 755Q1145 747 1147 741Q1152 736 1156 744Q1160 753 1162 764Q1165 768 1168 763Q1170 745 1162 727Q1155 711 1142 698Z" fill="url(#hand)"/>

<circle cx="779" cy="768" r="1.3" fill="#b0302a"/><circle cx="804" cy="757" r="1.3" fill="#b0302a"/><circle cx="1143" cy="755" r="1.3" fill="#b0302a"/><circle cx="1166" cy="765" r="1.3" fill="#b0302a"/>
<!-- cuff -->
<ellipse cx="812" cy="700.5" rx="17.5" ry="9.5" transform="rotate(38 812 700.5)" fill="#dcdce6"/><ellipse cx="811" cy="698" rx="13" ry="6" transform="rotate(38 811 698)" fill="#ececf4"/>
<!-- torso + legs -->
<path d="M912 584Q930 568 946 556L998 557Q1016 568 1034 584Q1024 605 1020 637Q1017 660 1018 681Q1021 700 1024 716Q1034 735 1041 760Q1047 785 1047 810L1048 905H1000Q990 850 972 804Q955 850 948 905H899Q897 850 898 800Q900 770 904 756Q912 735 922 718Q932 700 934 681Q934 660 930 637Q922 605 924 577Z" fill="url(#legs)"/>
<!-- leather highlights -->
<ellipse cx="945" cy="618" rx="11" ry="7" fill="url(#hl)"/>
<ellipse cx="1002" cy="620" rx="10" ry="6" fill="url(#hl)"/>
<ellipse cx="940" cy="600" rx="6" ry="12" fill="url(#hl)" opacity=".7"/>
<ellipse cx="1005" cy="700" rx="8" ry="18" fill="url(#hl)" opacity=".35"/>
<ellipse cx="918" cy="830" rx="10" ry="20" fill="url(#hl)" opacity=".55"/>
<ellipse cx="1020" cy="830" rx="12" ry="16" fill="url(#hl)" opacity=".45"/>
<ellipse cx="935" cy="765" rx="22" ry="5" transform="rotate(12 935 765)" fill="url(#hl)" opacity=".7"/>
<ellipse cx="1008" cy="768" rx="22" ry="5" transform="rotate(-12 1008 768)" fill="url(#hl)" opacity=".7"/>
<ellipse cx="945" cy="782" rx="20" ry="4" transform="rotate(15 945 782)" fill="url(#hl)" opacity=".5"/>
<ellipse cx="1000" cy="785" rx="20" ry="4" transform="rotate(-15 1000 785)" fill="url(#hl)" opacity=".5"/>
<ellipse cx="948" cy="625" rx="16" ry="12" fill="url(#hl)" opacity=".8"/>
<ellipse cx="1000" cy="628" rx="14" ry="11" fill="url(#hl)" opacity=".7"/>
<ellipse cx="922" cy="800" rx="14" ry="35" fill="url(#hl)" opacity=".45"/>
<ellipse cx="820" cy="688" rx="12" ry="5" transform="rotate(-35 820 688)" fill="url(#hl)" opacity=".6"/>
<ellipse cx="1115" cy="680" rx="12" ry="5" transform="rotate(35 1115 680)" fill="url(#hl)" opacity=".6"/>
<!-- neck & V -->
<path d="M957 540Q958 554 953 562Q961 600 970 655Q982 600 991 563Q987 554 988 540Z" fill="url(#chest)"/>
<path d="M953 562Q961 600 970 655 M991 563Q982 600 970 655" fill="none" stroke="#8c8c8c" stroke-width="1.1"/>
<path d="M945 552Q941 564 944 576L955 565Z M999 554Q1004 566 1001 578L990 566Z" fill="#2a2a2a"/>
<!-- belt -->
<path d="M922 718Q972 740 1023 715L1025 726Q972 752 920 729Z" fill="#0a0a0a"/>
<path d="M1005 727L1010 722" stroke="#777" stroke-width="1.5"/>
<!-- zipper -->
<path d="M972 656V773" stroke="#bdbdbd" stroke-width="2.3"/>
<rect x="961" y="728.5" width="23" height="15" fill="#151515" stroke="#c4c4c4" stroke-width="2.6"/>
<path d="M972 744V773" stroke="#c4c4c4" stroke-width="2.6"/>
<!-- hair dome -->
<path d="M921 492Q915 455 935 438Q955 420 976 420Q1000 420 1016 440Q1028 458 1023 492Q1015 470 1000 462Q985 455 972 456Q955 458 940 466Q928 475 921 492Z" fill="url(#hair)"/>
<g stroke="#5c4333" stroke-width="1.6" fill="none" opacity=".55"><path d="M933 448Q942 458 940 470 M948 432Q955 448 952 462 M966 424Q970 440 966 456 M986 424Q990 440 986 456 M1003 430Q1008 446 1004 462 M1015 444Q1020 456 1018 470"/></g>
<g stroke="#a08268" stroke-width="1" fill="none" opacity=".6"><path d="M940 440Q948 452 946 466 M957 428Q962 444 959 460 M976 423Q980 440 976 456 M995 426Q999 442 995 458 M1010 437Q1015 450 1012 466"/></g>
<!-- face -->
<path d="M931 495Q931 520 938 533Q946 546 956 552Q965 557 973 557Q982 557 990 551Q1002 544 1006 532Q1012 518 1012 495Q1010 468 990 458Q973 453 955 458Q935 470 931 495Z" fill="url(#skin)"/>
<ellipse cx="946" cy="518" rx="12" ry="9" fill="url(#cheek)"/>
<ellipse cx="1001" cy="518" rx="11" ry="9" fill="url(#cheek)"/>
<ellipse cx="951" cy="493" rx="14" ry="6" fill="url(#shadow)"/>
<ellipse cx="995" cy="493" rx="13" ry="6" fill="url(#shadow)"/>
<!-- bangs -->
<path d="M921 492Q925 470 945 458Q965 450 975 458Q962 468 952 478Q942 490 934 506Q929 528 932 552Q922 530 921 492Z" fill="url(#hair)"/>
<path d="M1023 492Q1020 470 1000 458Q985 452 978 458Q994 466 1004 478Q1010 490 1012 506Q1015 528 1013 550Q1025 525 1023 492Z" fill="url(#hair)"/>
<path d="M970 458Q962 472 966 490" fill="none" stroke="#8a6e5a" stroke-width="1.2" opacity=".6"/>
<!-- brows -->
<path d="M945 485Q954 482 963 486" fill="none" stroke="#5a3e30" stroke-width="1.4"/>
<path d="M983 486Q992 481 1001 483" fill="none" stroke="#5a3e30" stroke-width="1.4"/>
<!-- eyes -->
<path d="M938 500Q949 493 962 499Q958 508 950 508Q942 507 938 500Z" fill="#e8e2e2"/>
<path d="M983 499Q995 492 1006 499Q1001 508 993 508Q986 507 983 499Z" fill="#e8e2e2"/>
<circle cx="952.5" cy="501.5" r="5.3" fill="#1d3264"/>
<circle cx="994" cy="501.5" r="5.3" fill="#1d3264"/>
<circle cx="952.5" cy="501.5" r="2.4" fill="#05050c"/>
<circle cx="994" cy="501.5" r="2.4" fill="#05050c"/>
<circle cx="954" cy="499.5" r="1.1" fill="#fff"/>
<circle cx="995.5" cy="499.5" r="1.1" fill="#fff"/>
<path d="M936 497Q948 491 962 498" fill="none" stroke="#150c0c" stroke-width="2.2"/>
<path d="M983 498Q995 491 1006 497" fill="none" stroke="#150c0c" stroke-width="2.2"/>
<!-- nose -->
<path d="M968 519Q973 525 978 519" fill="none" stroke="#c8907a" stroke-width="1.3"/>
<ellipse cx="973" cy="517" rx="3" ry="4" fill="#fbe0d0" opacity=".7"/>
<!-- lips -->
<path d="M961 535Q967 531 973 533Q979 531 986 535Q979 537 973 537Q967 537 961 535Z" fill="#c8503e"/>
<path d="M961 535Q967 537 973 537Q979 537 986 535Q981 544 973 544Q965 544 961 535Z" fill="#e07763"/>
</g>
</svg>
<!--VPEND-->

<!-- ============ ANIMATION PLAYER ============ -->
<!--APMPSTART--><div class="a g" style="left:622px;top:925px;width:726px;height:20px"></div>
<div class="hdr" style="font-size:11.7px;left:622px;top:928.5px;width:746px;">Animation Player : Ivonne - Current Frame</div>
<svg style="left:1319px;top:928px" width="14" height="14"><circle cx="7" cy="7" r="5.8" fill="none" stroke="#1e3a00" stroke-width="1.1"/><path d="M4.3 4.3L9.7 9.7M9.7 4.3L4.3 9.7" stroke="#1e3a00" stroke-width="1.1"/></svg>
<div class="a" style="left:622px;top:945px;width:1px;height:104px;background:#666"></div>
<div class="a" style="left:1347px;top:945px;width:1px;height:104px;background:#666"></div>
<div class="a" style="left:957px;top:920px;width:3px;height:3px;background:#666"></div>
<div class="a" style="left:963px;top:920px;width:3px;height:3px;background:#666"></div>
<div class="a" style="left:969px;top:920px;width:3px;height:3px;background:#666"></div>
<div class="a" style="left:975px;top:920px;width:3px;height:3px;background:#666"></div>
<div class="a" style="left:981px;top:920px;width:3px;height:3px;background:#666"></div>
<div class="a" style="left:987px;top:920px;width:3px;height:3px;background:#666"></div>
<div class="a" style="left:993px;top:920px;width:3px;height:3px;background:#666"></div>
<div class="a" style="left:999px;top:920px;width:3px;height:3px;background:#666"></div>
<div class="a" style="left:1005px;top:920px;width:3px;height:3px;background:#666"></div>
<div class="a" style="left:1011px;top:920px;width:3px;height:3px;background:#666"></div>
<div class="a" style="left:657px;top:975px;width:488px;height:1px;background:#555"></div>
<svg style="left:642px;top:967px" width="16" height="16"><circle cx="8" cy="8" r="6.4" fill="#2a2a2a" stroke="#5e5e5e" stroke-width="1.5"/><circle cx="8" cy="8" r="2.5" fill="none" stroke="#3a3a3a" stroke-width="1"/></svg>
<div class="a" style="left:1160px;top:957px;width:51px;height:25px;border:1px solid #444"></div>
<div class="a" style="left:1195px;top:958px;width:1px;height:23px;background:#444"></div>
<svg style="left:1198px;top:961px" width="9" height="18"><path d="M1 5L4.5 1L8 5Z M1 12L4.5 16L8 12Z" fill="#4a4a4a"/></svg>
<svg style="left:1232px;top:961px" width="14" height="18"><g fill="none" stroke="#4a4a4a" stroke-width="1"><rect x="3" y="0.5" width="3" height="4" rx="1.5"/><path d="M3 5.5Q1 7 1.5 11L2.5 12V17H6.5V12"/><rect x="7.5" y="11" width="5" height="5"/><path d="M8.5 11V9.5Q10 8 11.5 9.5V11"/></g></svg>
<svg style="left:1266px;top:961px" width="22" height="19"><path d="M11 1L17.5 4L11 7L4.5 4Z" fill="#d0d0d0"/><path d="M4.5 5L10.5 8V13L4.5 10Z" fill="#bdbdbd"/><path d="M11.5 8L17.5 5V10L11.5 13Z" fill="#a8a8a8"/><path d="M2.5 8Q-1 12 4 14.5Q9 17 16 15 M18.5 8Q22 11 19.5 13.5" fill="none" stroke="#d0d0d0" stroke-width="1.3"/><path d="M6 12.5L9.5 15.5L6 18Z" fill="#d0d0d0"/></svg>
<svg style="left:1310px;top:962px" width="20" height="16"><path d="M1 1H12V9H1Z" fill="none" stroke="#d0d0d0" stroke-width="1.3"/><rect x="7.5" y="6" width="10.5" height="9" fill="#d0d0d0"/></svg>
<svg style="left:662px;top:1012px" width="14" height="14"><path d="M1 1V13" stroke="#505050" stroke-width="1.5"/><path d="M12.5 1L3 7L12.5 13Z" fill="#505050"/></svg>
<svg style="left:695px;top:1012px" width="16" height="14"><path d="M8 1L1 7L8 13Z M15 1L8 7L15 13Z" fill="#505050"/></svg>
<svg style="left:728px;top:1012px" width="14" height="14"><path d="M1.5 1L12.5 7L1.5 13Z" fill="#d6d6d6"/></svg>
<svg style="left:761px;top:1012px" width="16" height="14"><path d="M1 1L8 7L1 13Z M8 1L15 7L8 13Z" fill="#505050"/></svg>
<svg style="left:795px;top:1012px" width="14" height="14"><path d="M13 1V13" stroke="#505050" stroke-width="1.5"/><path d="M1.5 1L11 7L1.5 13Z" fill="#505050"/></svg>
<svg style="left:825px;top:1011px" width="34" height="17"><path d="M3 5V13H14 M5 3H16V11" fill="none" stroke="#4e4e4e" stroke-width="1.5"/><path d="M1 5L3 2L5 5Z M14 11L16 14L18 11Z" fill="#4e4e4e"/><path d="M2 3H6 M12 13H17" stroke="#4e4e4e" stroke-width="1.5"/><path d="M26 10H32L29 13Z" fill="#d6d6d6"/></svg>
<svg style="left:870px;top:1012px" width="17" height="16"><path d="M1 1H16V11H10L8 14L6 11H1Z" fill="none" stroke="#4e4e4e" stroke-width="1.2"/><path d="M5 6H6 M8 6H9 M11 6H12" stroke="#4e4e4e" stroke-width="1.5"/></svg>
<div class="a" style="left:897px;top:1007px;width:80px;height:25px;border:1px solid #444"></div>
<div class="t" style="left:897px;top:1013px;width:80px;text-align:center;font-size:12.2px;color:#4e4e4e">Realtime</div>
<div class="a" style="left:987px;top:1006px;width:1px;height:27px;background:#444"></div>
<div class="a" style="left:998px;top:1007px;width:63px;height:25px;border:1px solid #444"></div>
<div class="t" style="left:1010px;top:1013px;font-size:12.2px;color:#4e4e4e">1x</div>
<svg style="left:1044px;top:1016px" width="10" height="6"><path d="M0 0H10L5 5.5Z" fill="#4e4e4e"/></svg>
<div class="a" style="left:1066px;top:1007px;width:123px;height:25px;border:1px solid #555"></div>
<svg style="left:1088px;top:1011px" width="16" height="17"><path d="M10 1H13V6H10Z" fill="#d0d0d0"/><path d="M4 6.5L7.5 5L11 8H14.5 M7.5 5Q6 9 5 11L1 12.5 M6.5 9.5L11 11L10 14.5 M0.5 16.5L5 11.5" fill="none" stroke="#d0d0d0" stroke-width="1.2"/></svg>
<div class="t" style="left:1108px;top:1013px;font-size:12.2px;color:#dcdcdc">Motion</div>
<svg style="left:1178px;top:1022px" width="8" height="5"><path d="M0 0H8L4 4.5Z" fill="#d0d0d0"/></svg>
<div class="a" style="left:1194px;top:1007px;width:123px;height:25px;border:1px solid #555"></div>
<svg style="left:1217px;top:1011px" width="13" height="17"><path d="M0.5 3H12.5 M4 3V1H9V3 M2 4.5V16H11V4.5 M5 6V14 M8 6V14" fill="none" stroke="#d0d0d0" stroke-width="1.2"/></svg>
<div class="t" style="left:1238px;top:1013px;font-size:12.2px;color:#dcdcdc">Remove</div>
<svg style="left:1306px;top:1022px" width="8" height="5"><path d="M0 0H8L4 4.5Z" fill="#d0d0d0"/></svg>
<div class="a g" style="left:1353px;top:149px;width:567px;height:20px"></div>
<div class="hdr" style="font-size:11.7px;left:1353px;top:153px;width:587px;">Modify</div>
<svg style="left:1891px;top:153px" width="14" height="14"><circle cx="6.5" cy="6" r="5.4" fill="none" stroke="#1e3a00" stroke-width="1"/><path d="M4 3.5L9 8.5M9 3.5L4 8.5" stroke="#1e3a00" stroke-width="1"/></svg>
<div class="a" style="left:1353px;top:169px;width:567px;height:39px;background:#000"></div>
<div class="a" style="left:1393px;top:169px;width:38px;height:40px;background:#2a2a2a;border-left:1px solid #555;border-right:1px solid #555"></div>
<div class="a" style="left:1353px;top:208px;width:40px;height:1px;background:#555"></div>
<div class="a" style="left:1431px;top:208px;width:489px;height:1px;background:#555"></div>
<div class="a" style="left:1353px;top:169px;width:1px;height:880px;background:#555"></div>
<svg style="left:1360px;top:178px" width="25" height="22"><g stroke="#dcdcdc" stroke-width="1.3"><path d="M0.5 4H24 M0.5 11.5H24 M0.5 19H24"/></g><g fill="#000" stroke="#dcdcdc" stroke-width="1.2"><circle cx="10.5" cy="4" r="2.3"/><circle cx="18" cy="11.5" r="2.3"/><circle cx="6.5" cy="19" r="2.3"/></g></svg>
<svg style="left:1403px;top:177px" width="20" height="24"><path d="M12.5 0.5H16V7H12.5Z" fill="#8cc31c"/><path d="M5 8L9.5 6L14 9.5H18.5 M9.5 6Q8 11 6.5 13.5L1.5 15 M8.5 12L14 14L12.5 18.5 M0.5 22.5L6.5 15.5" fill="none" stroke="#8cc31c" stroke-width="1.5"/></svg>
<svg style="left:1436px;top:180px" width="29" height="18"><path d="M0.5 9H6.5 M22 9H28" stroke="#dcdcdc" stroke-width="1.6"/><path d="M8.5 9L5 5.5V12.5Z M20 9L23.5 5.5V12.5Z" fill="#dcdcdc"/><path d="M9.5 1H19 M9.5 17H19 M11.5 1Q15.5 9 11.5 17 M17 1Q13 9 17 17" fill="none" stroke="#dcdcdc" stroke-width="1.4"/></svg>
<svg style="left:1476px;top:178px" width="25" height="22"><path d="M14 3Q10 0.5 6 1.5Q1 3.5 1 10Q1 17 7 19Q11 20.5 13 17" fill="none" stroke="#dcdcdc" stroke-width="1.5"/><circle cx="6.5" cy="6.5" r="1.5" fill="#dcdcdc"/><circle cx="10.5" cy="4.5" r="1.5" fill="#dcdcdc"/><circle cx="4.5" cy="10.5" r="1.5" fill="#dcdcdc"/><path d="M11.5 8.5H22L13 18.5H24" fill="none" stroke="#dcdcdc" stroke-width="1.6"/></svg>
<svg style="left:1515px;top:178px" width="22" height="22"><rect width="22" height="22" fill="#d8d8d8"/><rect x="0.00" y="0.00" width="3.67" height="3.67" fill="#000"/><rect x="7.34" y="0.00" width="3.67" height="3.67" fill="#000"/><rect x="14.68" y="0.00" width="3.67" height="3.67" fill="#000"/><rect x="3.67" y="3.67" width="3.67" height="3.67" fill="#000"/><rect x="11.01" y="3.67" width="3.67" height="3.67" fill="#000"/><rect x="18.35" y="3.67" width="3.67" height="3.67" fill="#000"/><rect x="0.00" y="7.34" width="3.67" height="3.67" fill="#000"/><rect x="7.34" y="7.34" width="3.67" height="3.67" fill="#000"/><rect x="14.68" y="7.34" width="3.67" height="3.67" fill="#000"/><rect x="3.67" y="11.01" width="3.67" height="3.67" fill="#000"/><rect x="11.01" y="11.01" width="3.67" height="3.67" fill="#000"/><rect x="18.35" y="11.01" width="3.67" height="3.67" fill="#000"/><rect x="0.00" y="14.68" width="3.67" height="3.67" fill="#000"/><rect x="7.34" y="14.68" width="3.67" height="3.67" fill="#000"/><rect x="14.68" y="14.68" width="3.67" height="3.67" fill="#000"/><rect x="3.67" y="18.35" width="3.67" height="3.67" fill="#000"/><rect x="11.01" y="18.35" width="3.67" height="3.67" fill="#000"/><rect x="18.35" y="18.35" width="3.67" height="3.67" fill="#000"/></svg>
<svg style="left:1551px;top:177px" width="27" height="24"><g fill="none" stroke="#dcdcdc" stroke-width="1.4"><ellipse cx="13.5" cy="12" rx="12.5" ry="5"/><ellipse cx="13.5" cy="12" rx="12.5" ry="5" transform="rotate(60 13.5 12)"/><ellipse cx="13.5" cy="12" rx="12.5" ry="5" transform="rotate(-60 13.5 12)"/></g><circle cx="13.5" cy="12" r="2.3" fill="#dcdcdc"/></svg>
<div class="a" style="left:1369px;top:224px;width:534px;height:20px;background:#555"></div>
<div class="a" style="left:1374px;top:233px;width:7px;height:2px;background:#9a9a9a"></div>
<div class="hdr" style="font-size:11.7px;left:1369px;top:227px;width:534px;color:#dadada;">Motion</div>
<div class="a" style="left:1369px;top:454px;width:534px;height:20px;background:#555"></div>
<div class="a" style="left:1374px;top:463px;width:7px;height:2px;background:#9a9a9a"></div>
<div class="hdr" style="font-size:11.7px;left:1369px;top:457px;width:534px;color:#dadada;">Setup</div>
<div class="a" style="left:1369px;top:259px;width:535px;height:50px;border:1px solid #484848;border-radius:6px"></div>
<svg style="left:1561px;top:268px" width="44" height="40"><rect x="16.5" y="4" width="3" height="10" fill="#d6d6d6"/><path d="M18 13.5L15.5 17.5H23.5" fill="none" stroke="#d6d6d6" stroke-width="1.4"/><path d="M1 29.5L13 17.5 M6 17L11.5 12.5L15 15.5" fill="none" stroke="#d6d6d6" stroke-width="1.3"/><path d="M13 19.5L9.5 24H16.5" fill="none" stroke="#d6d6d6" stroke-width="1.3"/><path d="M28 6.5L38 16" stroke="#d6d6d6" stroke-width="1.4"/><path d="M25 2.5L34 5.5L28.5 11.5Z" fill="#d6d6d6"/></svg>
<div class="t" style="left:1615px;top:277px;font-size:12.2px;line-height:16px;color:#dcdcdc">Edit Pose</div>
<div class="a" style="left:1369px;top:319px;width:535px;height:50px;border:1px solid #484848;border-radius:6px"></div>
<svg style="left:1561px;top:328px" width="44" height="40"><path d="M1.5 2.5H38.5 M1.5 23.5H18 M29.7 13V24 M23 19H37 M29.7 24L24 30 M29.7 24L35.5 30" fill="none" stroke="#d6d6d6" stroke-width="1.3"/><rect x="27" y="6" width="5.4" height="7" fill="#d6d6d6"/><path d="M10.5 8.4L14.7 12.6L10.5 16.8L6.3 12.6Z" fill="#d6d6d6"/></svg>
<div class="t" style="left:1615px;top:337px;font-size:12.2px;line-height:16px;color:#dcdcdc">Import Animation</div>
<div class="a" style="left:1369px;top:379px;width:535px;height:50px;border:1px solid #484848;border-radius:6px"></div>
<svg style="left:1561px;top:388px" width="44" height="40"><path d="M2 2.5H37.6 M2 23H18" fill="none" stroke="#d6d6d6" stroke-width="1.3"/><path d="M10.5 8.6L14.5 12.6L10.5 16.6L6.5 12.6Z" fill="#d6d6d6"/><path d="M21.5 29.7Q25 29 27 27V24Q22 21 21.8 16.5Q21 16 21.8 14.5Q21.5 6 30 6Q38.5 6 38.3 14.5Q39 16 38.2 16.5Q38 21 33 24V27Q35 29 38.5 29.7" fill="none" stroke="#d6d6d6" stroke-width="1.2"/><path d="M25 16.6H27.5 M31.5 16.6H34 M27.5 22.5Q30 23.5 32.5 22.5" stroke="#d6d6d6" stroke-width="1.3" fill="none"/></svg>
<div class="t" style="left:1616px;top:397px;font-size:12.2px;line-height:16px;color:#dcdcdc">Edit Facial</div>
<div class="a" style="left:1369px;top:489px;width:535px;height:50px;border:1px solid #484848;border-radius:6px"></div>
<svg style="left:1561px;top:498px" width="44" height="40"><rect x="10.5" y="3.3" width="3.5" height="6.7" fill="#d6d6d6"/><path d="M1.5 10Q2 11.5 3.5 11.5H21Q22.5 11.5 23 10 M12.2 10V22 M12.2 22L9.8 24V33H6.5 M12.2 22L14.6 24V33H18" fill="none" stroke="#d6d6d6" stroke-width="1.1"/><path d="M29 8.5L38 17" stroke="#d6d6d6" stroke-width="1.4"/><path d="M26 5L35 8.5L29.5 14Z" fill="#d6d6d6"/></svg>
<div class="t" style="left:1617px;top:507px;font-size:12.2px;line-height:16px;color:#dcdcdc">Set HIK T-Pose</div>
<div class="a" style="left:1369px;top:549px;width:535px;height:60px;border:1px solid #484848;border-radius:6px"></div>
<svg style="left:1561px;top:559px" width="44" height="40"><path d="M7 39L9 34Q9 32 7.5 31Q4.5 28 4.5 25.5Q2.5 24 2.5 21.5Q3 20 2.5 17Q2 2 16 1.5Q27.5 1.5 29.5 13.5 M7 39H25.6V34" fill="none" stroke="#d6d6d6" stroke-width="1.4"/><ellipse cx="10.5" cy="18" rx="1.7" ry="1" fill="#d6d6d6"/><ellipse cx="23" cy="18" rx="1.7" ry="1" fill="#d6d6d6"/><path d="M14 27.5Q17.5 29.5 21 27.5" stroke="#d6d6d6" stroke-width="1.6" fill="none"/><path d="M27.5 27L35 19L38 22L30.5 30Z" fill="#d6d6d6"/><path d="M26.5 28L24.5 34L29.5 31Z" fill="#d6d6d6"/></svg>
<div class="t" style="left:1619px;top:572px;font-size:12.2px;line-height:16px;color:#dcdcdc">Facial Profile Editor</div>
<div class="a" style="left:1349px;top:570px;width:3px;height:3px;background:#666"></div>
<div class="a" style="left:1349px;top:576px;width:3px;height:3px;background:#666"></div>
<div class="a" style="left:1349px;top:582px;width:3px;height:3px;background:#666"></div>
<div class="a" style="left:1349px;top:588px;width:3px;height:3px;background:#666"></div>
<div class="a" style="left:1349px;top:594px;width:3px;height:3px;background:#666"></div>
<div class="a" style="left:1349px;top:600px;width:3px;height:3px;background:#666"></div>
<div class="a" style="left:1349px;top:606px;width:3px;height:3px;background:#666"></div>
<div class="a" style="left:1349px;top:612px;width:3px;height:3px;background:#666"></div>
<div class="a" style="left:1349px;top:618px;width:3px;height:3px;background:#666"></div>
<div class="a" style="left:1349px;top:624px;width:3px;height:3px;background:#666"></div><!--APMPEND-->

<!-- ============ MODIFY PANEL ============ -->


<div class="a" style="left:0;top:1049px;width:1920px;height:1px;background:#7a7a7a"></div><div class="a" style="left:0;top:1050px;width:1920px;height:1px;background:#e2e2e2"></div>
</body></html>
